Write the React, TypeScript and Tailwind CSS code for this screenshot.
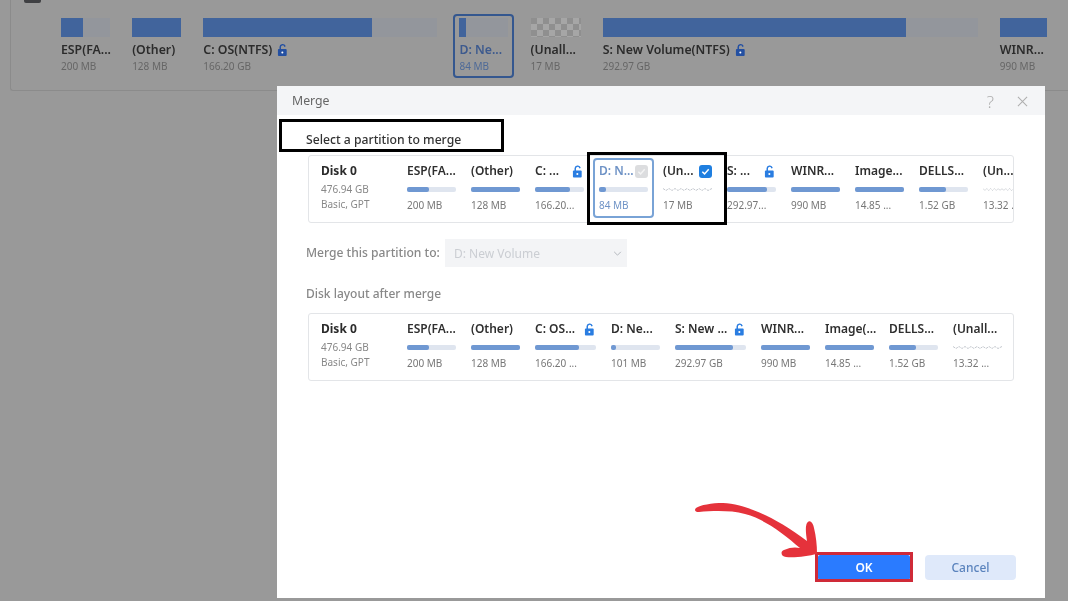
type Part = {
  name: string
  size: string
  w: number
  used: number
  lock?: boolean
  unalloc?: boolean
  selected?: boolean
  check?: 'gray' | 'blue'
}

const backParts: Part[] = [
  { name: 'ESP(FA...', size: '200 MB', w: 49, used: 45 },
  { name: '(Other)', size: '128 MB', w: 49, used: 100 },
  { name: 'C: OS(NTFS)', size: '166.20 GB', w: 234, used: 72, lock: true },
  { name: 'D: Ne...', size: '84 MB', w: 49, used: 14, selected: true },
  { name: '(Unall...', size: '17 MB', w: 50, used: 0, unalloc: true },
  { name: 'S: New Volume(NTFS)', size: '292.97 GB', w: 375, used: 81, lock: true },
  { name: 'WINR...', size: '990 MB', w: 47, used: 100 },
]

const selectParts: Part[] = [
  { name: 'ESP(FA...', size: '200 MB', w: 49, used: 45 },
  { name: '(Other)', size: '128 MB', w: 49, used: 100 },
  { name: 'C: ...', size: '166.20...', w: 49, used: 72, lock: true },
  { name: 'D: N...', size: '84 MB', w: 49, used: 14, selected: true, check: 'gray' },
  { name: '(Un...', size: '17 MB', w: 49, used: 0, unalloc: true, check: 'blue' },
  { name: 'S: ...', size: '292.97...', w: 49, used: 82, lock: true },
  { name: 'WINR...', size: '990 MB', w: 49, used: 100 },
  { name: 'Image...', size: '14.85 ...', w: 49, used: 100 },
  { name: 'DELLS...', size: '1.52 GB', w: 49, used: 55 },
  { name: '(Un...', size: '13.32 ...', w: 31, used: 0, unalloc: true },
]

const afterParts: Part[] = [
  { name: 'ESP(FA...', size: '200 MB', w: 49, used: 45 },
  { name: '(Other)', size: '128 MB', w: 49, used: 100 },
  { name: 'C: OS...', size: '166.20 ...', w: 61, used: 72, lock: true },
  { name: 'D: Ne...', size: '101 MB', w: 49, used: 10 },
  { name: 'S: New ...', size: '292.97 GB', w: 71, used: 81, lock: true },
  { name: 'WINR...', size: '990 MB', w: 49, used: 100 },
  { name: 'Image(...', size: '14.85 ...', w: 49, used: 100 },
  { name: 'DELLS...', size: '1.52 GB', w: 49, used: 55 },
  { name: '(Unall...', size: '13.32 ...', w: 49, used: 0, unalloc: true },
]

function LockIcon({ className }: { className: string }) {
  return (
    <svg viewBox="0 0 13 14" className={className} fill="none">
      <path d="M3.5 6.5V3.8a2.6 2.6 0 0 1 5-1" stroke="currentColor" strokeWidth="1.6" strokeLinecap="round" />
      <rect x="1" y="6" width="9.5" height="7.5" rx="1" fill="currentColor" />
      <circle cx="5.8" cy="9.7" r="1.1" fill="#fff" />
    </svg>
  )
}

function Wave() {
  return (
    <svg viewBox="0 0 49 5" preserveAspectRatio="none" className="h-[5px] w-full text-[#c4c8ce]" fill="none">
      <path
        d="M0 1.5 3 3.5 6 1.5 9 3.5 12 1.5 15 3.5 18 1.5 21 3.5 24 1.5 27 3.5 30 1.5 33 3.5 36 1.5 39 3.5 42 1.5 45 3.5 49 1.5"
        stroke="currentColor"
        strokeWidth="1"
        strokeDasharray="2.5 0.8"
      />
    </svg>
  )
}

function CheckBox({ blue }: { blue: boolean }) {
  return (
    <span
      className={`flex h-[13px] w-[13px] shrink-0 items-center justify-center rounded-[3px] ${
        blue ? 'bg-[#1f7fe0]' : 'bg-[#dcdddf]'
      }`}
    >
      <svg viewBox="0 0 12 12" className="h-[11px] w-[11px]" fill="none">
        <path d="M2.5 6.2 5 8.6l4.5-5" stroke={blue ? '#fff' : '#f4f4f4'} strokeWidth="1.6" />
      </svg>
    </span>
  )
}

function BackItem({ part }: { part: Part }) {
  return (
    <div
      className={`shrink-0 ${
        part.selected ? 'rounded-[4px] border-2 border-[#34578f] px-[4px] pt-[2px] -mx-[6px] h-[64px] -mt-[4px]' : ''
      }`}
      style={{ width: part.selected ? part.w + 12 : part.w }}
    >
      {part.unalloc ? (
        <div className="h-[19px] bg-[repeating-conic-gradient(#a6a6a6_0_25%,#8f8f8f_0_50%)] bg-[length:12px_12px]" />
      ) : (
        <div className="h-[19px] bg-[#93969c]">
          <div className="h-full bg-[#41649c]" style={{ width: `${part.used}%` }} />
        </div>
      )}
      <div className="mt-[3px] flex h-[20px] items-center gap-[5px] whitespace-nowrap">
        <span className={`text-[12.3px] font-semibold ${part.selected ? 'text-[#3d5a8e]' : 'text-[#2b2b2b]'}`}>
          {part.name}
        </span>
        {part.lock && <LockIcon className="h-[14px] w-[12px] text-[#2450a2]" />}
      </div>
      <div
        className={`-mt-[1px] h-[14px] whitespace-nowrap text-[10px] leading-[14px] ${
          part.selected ? 'text-[#4e6a98]' : 'text-[#666666]'
        }`}
      >
        {part.size}
      </div>
    </div>
  )
}

function StripItem({ part }: { part: Part }) {
  return (
    <div className="relative shrink-0" style={{ width: part.w }}>
      {part.selected && (
        <span className="absolute -inset-x-[6px] top-[-3px] h-[60px] rounded-[4px] border-2 border-[#79a3d6]" />
      )}
      <div className="flex h-[20px] items-center justify-between whitespace-nowrap">
        <span className={`text-[12px] font-semibold ${part.selected ? 'text-[#6f93c6]' : 'text-[#2f2f2f]'}`}>
          {part.name}
        </span>
        {part.lock && <LockIcon className="h-[13px] w-[12px] shrink-0 text-[#2a7de1]" />}
        {part.check && <CheckBox blue={part.check === 'blue'} />}
      </div>
      {part.unalloc ? (
        <div className="mt-[6px] overflow-hidden">
          <Wave />
        </div>
      ) : (
        <div className="mt-[6px] h-[5px] rounded-[2px] bg-[#dfe5ef]">
          <div className="h-full rounded-[2px] bg-[#6f98d2]" style={{ width: `${part.used}%` }} />
        </div>
      )}
      <div
        className={`mt-[3px] h-[20px] whitespace-nowrap text-[10px] leading-[20px] ${
          part.selected ? 'text-[#6f93c6]' : 'text-[#777777]'
        }`}
      >
        {part.size}
      </div>
    </div>
  )
}

function DiskStrip({ parts }: { parts: Part[] }) {
  return (
    <div className="mx-[31px] flex h-[68px] overflow-hidden rounded-[3px] border border-[#e3e5e8] pl-[12px] pt-[5px]">
      <div className="w-[86px] shrink-0">
        <div className="h-[20px] text-[12px] font-bold leading-[20px] text-[#2b2b2b]">Disk 0</div>
        <div className="mt-[1px] text-[10px] leading-[15px] text-[#888888]">476.94 GB</div>
        <div className="text-[10px] leading-[15px] text-[#888888]">Basic, GPT</div>
      </div>
      <div className="flex gap-[15px]">
        {parts.map((part, i) => (
          <StripItem key={i} part={part} />
        ))}
      </div>
    </div>
  )
}

export default function App() {
  return (
    <div className="relative h-[601px] w-[1068px] overflow-hidden bg-[#999999] font-['Noto_Sans',sans-serif] blur-[0.5px]">
      {/* window behind the dialog */}
      <div className="ml-[10px] flex h-[91px] gap-[22.15px] rounded-bl-[3px] border-b border-l border-[#8b8b8b] pl-[50px] pt-[18px]">
        {backParts.map((part, i) => (
          <BackItem key={i} part={part} />
        ))}
      </div>
      <div className="absolute left-[24px] top-[-12px] h-[15px] w-[17px] rounded-[2px] bg-[#3f4043]" />
      <div className="absolute left-[51px] top-[-16px] text-[12px] font-semibold text-[#2b2b2b]">Disk 0</div>

      {/* merge dialog */}
      <div className="absolute left-[277px] top-[86px] flex h-[512px] w-[768px] flex-col bg-white">
        <div className="flex h-[29px] shrink-0 items-center justify-between bg-[#f4f5f7] pl-[15px] pr-[17px] pt-[1px]">
          <span className="text-[12.3px] text-[#666666]">Merge</span>
          <div className="flex items-center gap-[23px] text-[#aeaeae]">
            <span className="text-[17px] font-light leading-none">?</span>
            <svg viewBox="0 0 12 12" className="h-[11px] w-[11px]" fill="none">
              <path d="M1 1l10 10M11 1 1 11" stroke="currentColor" strokeWidth="1.1" />
            </svg>
          </div>
        </div>

        <div className="ml-[29px] mt-[15px] h-[20px] text-[12.2px] font-medium leading-[20px] text-[#333333]">
          Select a partition to merge
        </div>
        <div className="mt-[5px]">
          <DiskStrip parts={selectParts} />
        </div>

        <div className="ml-[29px] mt-[16px] flex h-[28px] items-center">
          <span className="w-[139px] whitespace-nowrap pt-[1px] text-[12.1px] font-medium text-[#888888]">
            Merge this partition to:
          </span>
          <div className="flex h-[28px] w-[182px] items-center justify-between bg-[#f3f4f6] pl-[9px] pr-[5px]">
            <span className="pt-[1px] text-[12px] text-[#cbced3]">D: New Volume</span>
            <svg viewBox="0 0 10 6" className="h-[5px] w-[9px]" fill="none">
              <path d="M1 1l4 4 4-4" stroke="#b4b8be" strokeWidth="1.2" />
            </svg>
          </div>
        </div>

        <div className="ml-[29px] mt-[17px] h-[20px] text-[12px] font-medium leading-[20px] text-[#888888]">
          Disk layout after merge
        </div>
        <div className="mt-[9px]">
          <DiskStrip parts={afterParts} />
        </div>

        <div className="mt-auto flex justify-end gap-[15px] pb-[18px] pr-[29px]">
          <button className="h-[25px] w-[92px] rounded-[2px] bg-[#2a7bff] text-[12px] font-semibold text-white">
            OK
          </button>
          <button className="h-[25px] w-[91px] rounded-[4px] bg-[#dfe9fa] text-[12px] font-medium text-[#5a83bd]">
            Cancel
          </button>
        </div>
      </div>

      {/* annotations */}
      <div className="absolute left-[279px] top-[119px] h-[33px] w-[225px] border-[3px] border-black" />
      <div className="absolute left-[587px] top-[152px] h-[73px] w-[140px] border-[3px] border-black" />
      <div className="absolute left-[815px] top-[552px] h-[30px] w-[98px] border-[3px] border-[#cf2a38]" />
      <svg className="absolute left-0 top-0 h-[601px] w-[1068px]" viewBox="0 0 1068 601" fill="none">
        <path
          d="M696 508 C700 505 712 503 723 503 C745 504 775 517 807 541 C806 534 805 527 807 523 C810 519 813 523 814 528 C816 536 817 545 817 554 C808 556 795 558 786 557 C781 557 780 551 784 550 C790 547 796 547 800 548 C785 535 765 519 745 514 C730 510 712 511 699 512 C695 512 694 510 696 508 Z"
          fill="#e5323b"
        />
      </svg>
    </div>
  )
}
